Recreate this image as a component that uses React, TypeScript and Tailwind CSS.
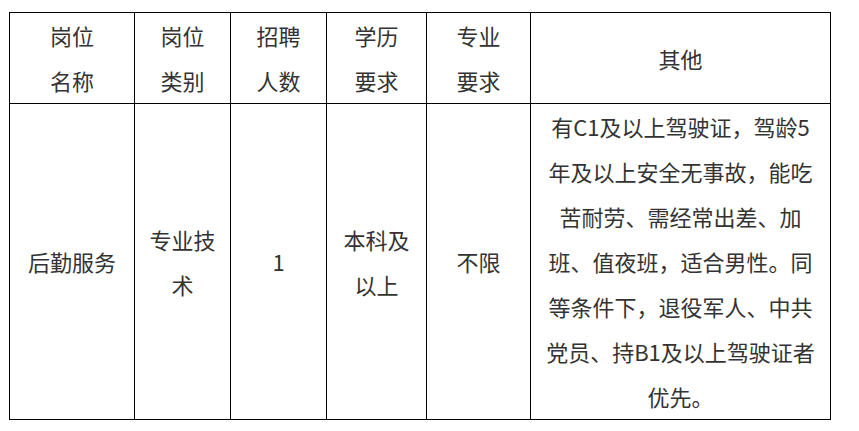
const font = { fontFamily: '"Microsoft YaHei", "Noto Sans CJK SC", "Noto Sans", sans-serif' }

const cell = 'border border-black text-center align-middle p-0 font-normal'

export default function App() {
  return (
    <div className="bg-white w-[859px] h-[431px] pl-[9px] pt-[12px]">
      <table
        className="table-fixed border-collapse w-[821px] text-[22px] leading-[45px] text-[#333333]"
        style={font}
      >
        <colgroup>
          <col className="w-[125px]" />
          <col className="w-[96px]" />
          <col className="w-[96px]" />
          <col className="w-[100px]" />
          <col className="w-[104px]" />
          <col className="w-[300px]" />
        </colgroup>
        <thead>
          <tr className="h-[91px]">
            <th className={cell}>岗位<br />名称</th>
            <th className={cell}>岗位<br />类别</th>
            <th className={cell}>招聘<br />人数</th>
            <th className={cell}>学历<br />要求</th>
            <th className={cell}>专业<br />要求</th>
            <th className={cell}>其他</th>
          </tr>
        </thead>
        <tbody>
          <tr className="h-[316px]">
            <td className={cell}>后勤服务</td>
            <td className={cell}>专业技<br />术</td>
            <td className={cell}>1</td>
            <td className={cell}>本科及<br />以上</td>
            <td className={cell}>不限</td>
            <td className={cell}>
              有C1及以上驾驶证，驾龄5<br />
              年及以上安全无事故，能吃<br />
              苦耐劳、需经常出差、加<br />
              班、值夜班，适合男性。同<br />
              等条件下，退役军人、中共<br />
              党员、持B1及以上驾驶证者<br />
              优先。
            </td>
          </tr>
        </tbody>
      </table>
    </div>
  )
}
